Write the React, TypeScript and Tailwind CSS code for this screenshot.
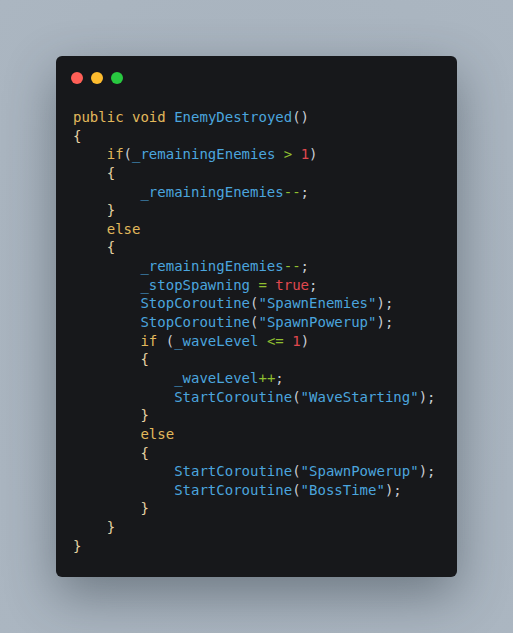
import React from "react";

const K = "text-[#e2b85c]"; // keyword
const F = "text-[#4ba5de]"; // identifier/function
const O = "text-[#8fbf30]"; // operator
const N = "text-[#e0484f]"; // number / literal
const P = "text-[#c9ccd2]"; // punctuation
const B = "text-[#e6d3a3]"; // braces

type Tok = [string, string];
const ind = (n: number): Tok => [" ".repeat(n * 4), P];

const lines: Tok[][] = [
  [["public", K], [" ", P], ["void", K], [" ", P], ["EnemyDestroyed", F], ["()", P]],
  [["{", B]],
  [ind(1), ["if", K], ["(", P], ["_remainingEnemies", F], [" ", P], [">", O], [" ", P], ["1", N], [")", P]],
  [ind(1), ["{", B]],
  [ind(2), ["_remainingEnemies", F], ["--", O], [";", P]],
  [ind(1), ["}", B]],
  [ind(1), ["else", K]],
  [ind(1), ["{", B]],
  [ind(2), ["_remainingEnemies", F], ["--", O], [";", P]],
  [ind(2), ["_stopSpawning", F], [" ", P], ["=", O], [" ", P], ["true", N], [";", P]],
  [ind(2), ["StopCoroutine", F], ["(", P], ["\"SpawnEnemies\"", F], [");", P]],
  [ind(2), ["StopCoroutine", F], ["(", P], ["\"SpawnPowerup\"", F], [");", P]],
  [ind(2), ["if", K], [" (", P], ["_waveLevel", F], [" ", P], ["<=", O], [" ", P], ["1", N], [")", P]],
  [ind(2), ["{", B]],
  [ind(3), ["_waveLevel", F], ["++", O], [";", P]],
  [ind(3), ["StartCoroutine", F], ["(", P], ["\"WaveStarting\"", F], [");", P]],
  [ind(2), ["}", B]],
  [ind(2), ["else", K]],
  [ind(2), ["{", B]],
  [ind(3), ["StartCoroutine", F], ["(", P], ["\"SpawnPowerup\"", F], [");", P]],
  [ind(3), ["StartCoroutine", F], ["(", P], ["\"BossTime\"", F], [");", P]],
  [ind(2), ["}", B]],
  [ind(1), ["}", B]],
  [["}", B]],
];

export default function App() {
  return (
    <div className="min-h-[633px] w-full bg-[radial-gradient(ellipse_at_center,#a3aeb9_0%,#a9b4bf_60%,#abb6c1_100%)] p-[56px]">
      <div className="rounded-md bg-[#17181b] pt-4 pl-[15px] pr-4 pb-[22px] shadow-[0_18px_50px_rgba(40,50,60,0.45)]">
        <div className="flex h-3 items-center gap-2">
          <span className="h-3 w-3 rounded-full bg-[#ff5f57]" />
          <span className="h-3 w-3 rounded-full bg-[#febc2e]" />
          <span className="h-3 w-3 rounded-full bg-[#28c840]" />
        </div>
        <pre className="mt-[24px] pl-[2px] font-['DejaVu_Sans_Mono',monospace] text-[14px] leading-[18.65px] whitespace-pre">
          {lines.map((l, i) => (
            <div key={i} className="h-[18.65px]">
              {l.map(([t, c], j) => (
                <span key={j} className={c}>
                  {t}
                </span>
              ))}
            </div>
          ))}
        </pre>
      </div>
    </div>
  );
}
